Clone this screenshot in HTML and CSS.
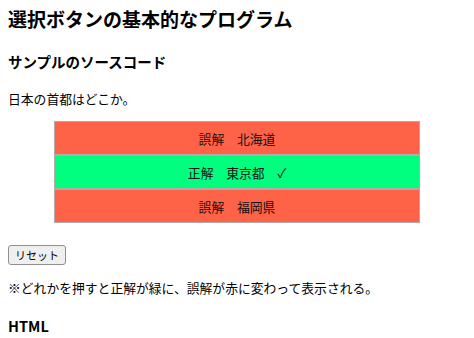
FILE: index.html
```html
<!DOCTYPE html>
<html lang="ja">
<head>
<meta charset="utf-8">
<title>選択ボタンの基本的なプログラム</title>
<link rel="stylesheet" href="styles.css">
</head>
<body>
<h2 class="title">選択ボタンの基本的なプログラム</h2>
<h3 class="sub">サンプルのソースコード</h3>
<p class="question">日本の首都はどこか。</p>
<div class="choices">
  <button class="choice wrong">誤解　北海道</button>
  <button class="choice right">正解　東京都　✓</button>
  <button class="choice wrong">誤解　福岡県</button>
</div>
<button class="reset">リセット</button>
<p class="note">※どれかを押すと正解が緑に、誤解が赤に変わって表示される。</p>
<h3 class="sub html">HTML</h3>
</body>
</html>
```
FILE: styles.css
```css
body {
  margin: 0 8px;
  font-family: "Noto Sans CJK JP", "Noto Sans", sans-serif;
  color: #000;
  background: #fff;
}
.title {
  font-size: 19px;
  line-height: 24px;
  font-weight: bold;
  margin: 7px 0 21px;
}
.sub {
  font-size: 14.5px;
  line-height: 20px;
  font-weight: bold;
  margin: 0 0 18px;
}
.question {
  font-size: 12.8px;
  line-height: 18px;
  margin: 0 0 13px;
}
.choices {
  width: 80%;
  margin: 0 auto;
  display: flex;
  flex-direction: column;
}
.choice {
  display: block;
  width: 100%;
  height: 34px;
  margin: 0;
  padding: 0;
  border: 1px solid #b4aaa8;
  font-family: inherit;
  font-size: 12.8px;
  color: #111;
}
.wrong { background: #ff6347; }
.right { background: #00ff7f; }
.reset {
  display: block;
  margin-top: 22px;
  height: 20px;
  padding: 0 6px;
  font-family: inherit;
  font-size: 11px;
  line-height: 18px;
  color: #000;
  background: #efefef;
  border: 1px solid #8f8f8f;
  border-radius: 3px;
}
.note {
  font-size: 12.8px;
  line-height: 18px;
  margin: 14px 0 19px;
}
.html {
  margin: 0;
}
```
